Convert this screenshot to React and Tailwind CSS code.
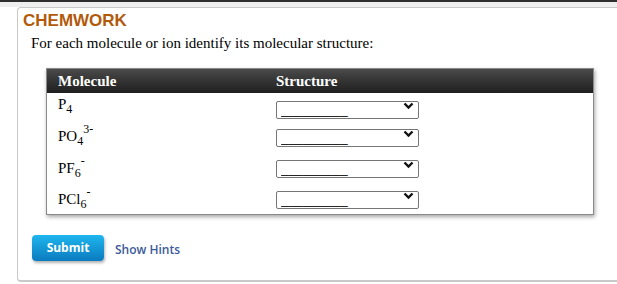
import React from "react";

const serif = { fontFamily: '"Liberation Serif", "Times New Roman", serif' };
const sans = { fontFamily: '"Liberation Sans", Arial, sans-serif' };

const rows = [
  { key: "p4", base: "P", sub: "4", sup: null, h: "h-[28px]", pt: "pt-[2px]" },
  { key: "po4", base: "PO", sub: "4", sup: "3-", h: "h-[31px]", pt: "pt-[6px]" },
  { key: "pf6", base: "PF", sub: "6", sup: "-", h: "h-[31px]", pt: "pt-[7px]" },
  { key: "pcl6", base: "PCl", sub: "6", sup: "-", h: "h-[31px]", pt: "pt-[7px]" },
];

function Formula({ base, sub, sup }) {
  return (
    <span className="whitespace-nowrap text-[15px]" style={serif}>
      {base}
      <span className="relative top-[4px] text-[12px] leading-none">{sub}</span>
      {sup && <span className="relative top-[-8px] text-[12px] leading-none">{sup}</span>}
    </span>
  );
}

function StructureSelect() {
  return (
    <div className="relative w-[143px] h-[18px]">
      <select
        defaultValue=""
        className="appearance-none w-full h-full border border-[#767676] rounded-[2px] bg-white pl-[4px] pr-[20px] text-[13.3px] leading-[16px] text-black outline-none"
        style={sans}
      >
        <option value="">_________</option>
        <option value="t">tetrahedral</option>
        <option value="o">octahedral</option>
      </select>
      <svg
        className="absolute right-[5px] top-[5px] pointer-events-none"
        width="11"
        height="8"
        viewBox="0 0 11 8"
      >
        <path d="M1.5 1.5 L5.5 5.5 L9.5 1.5" fill="none" stroke="#111" strokeWidth="2.4" />
      </svg>
    </div>
  );
}

export default function App() {
  return (
    <div className="w-[617px] h-[284px] overflow-hidden bg-white">
      <div className="h-[2px] bg-[#2e2e2e]" />
      <div className="h-[5px] bg-[#efefef]" />
      <div className="ml-[17px] w-[640px] h-[275px] border-l border-t border-b-2 border-[#c9c9c9] rounded-l-[4px] bg-white pl-[5px] pt-[3px]">
        <div className="text-[17px] leading-[20px] font-bold text-[#b25a0c]" style={sans}>
          CHEMWORK
        </div>
        <div style={serif}>
          <p className="mt-[3px] pl-[8px] text-[15px] leading-[18px] text-black">
            For each molecule or ion identify its molecular structure:
          </p>
          <div className="mt-[16px] ml-[23px] w-[548px] border border-[#8a8a8a] shadow-[1px_2px_4px_rgba(0,0,0,0.35)] bg-white">
            <div className="h-[24px] flex bg-gradient-to-b from-[#4a4a4a] to-[#1f1f1f] text-white font-bold text-[15px] leading-[18px] pt-[3px]">
              <div className="w-[229px] pl-[11px]">Molecule</div>
              <div>Structure</div>
            </div>
            {rows.map((r) => (
              <div key={r.key} className={`flex ${r.h}`}>
                <div className={`w-[229px] pl-[11px] leading-[18px] text-black ${r.pt}`} style={serif}>
                  <Formula base={r.base} sub={r.sub} sup={r.sup} />
                </div>
                <div className="pt-[4px]">
                  <StructureSelect />
                </div>
              </div>
            ))}
          </div>
        </div>
        <div
          className="mt-[20px] ml-[9px] flex items-center gap-[11px]"
          style={{ fontFamily: '"Open Sans", "Liberation Sans", sans-serif' }}
        >
          <button className="w-[72px] h-[26px] rounded-[4px] bg-gradient-to-b from-[#1fb6ee] to-[#0b7bbf] text-white text-[12px] font-bold shadow-[1px_2px_3px_rgba(0,0,0,0.3)]">
            Submit
          </button>
          <span className="text-[12px] font-semibold text-[#3b5a9a] pt-[3px]">Show Hints</span>
        </div>
      </div>
    </div>
  );
}
